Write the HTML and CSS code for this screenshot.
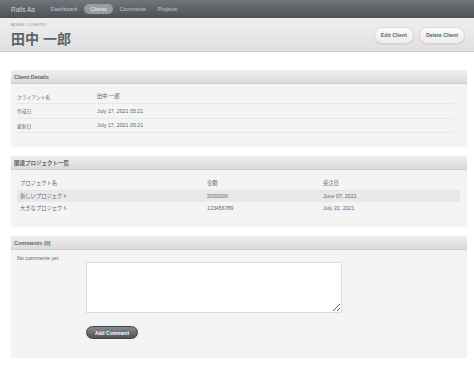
FILE: index.html
```html
<!DOCTYPE html>
<html lang="ja">
<head>
    <meta charset="UTF-8">
    <meta name="viewport" content="width=device-width, initial-scale=1.0">
    <title>田中 一郎 | Rails Aa</title>
    <link rel="stylesheet" href="styles.css">
</head>
<body>
    <div class="header">
        <span class="site-title">Rails Aa</span>
        <ul class="tabs">
            <li><a href="#">Dashboard</a></li>
            <li class="current"><a href="#">Clients</a></li>
            <li><a href="#">Comments</a></li>
            <li><a href="#">Projects</a></li>
        </ul>
    </div>

    <div class="title-bar">
        <div class="title-left">
            <div class="breadcrumb">ADMIN / CLIENTS /</div>
            <h2 class="page-title">田中 一郎</h2>
        </div>
        <div class="action-items">
            <a href="#" class="action-btn">Edit Client</a>
            <a href="#" class="action-btn">Delete Client</a>
        </div>
    </div>

    <div class="main">
        <div class="panel">
            <h3 class="panel-header">Client Details</h3>
            <div class="panel-body details">
                <table class="attr-table">
                    <tr><th>クライアント名</th><td>田中 一郎</td></tr>
                    <tr><th>作成日</th><td>July 17, 2021 05:21</td></tr>
                    <tr><th>更新日</th><td>July 17, 2021 05:21</td></tr>
                </table>
            </div>
        </div>

        <div class="panel">
            <h3 class="panel-header">関連プロジェクト一覧</h3>
            <div class="panel-body projects">
                <table class="index-table">
                    <thead>
                        <tr><th class="col-name">プロジェクト名</th><th class="col-amount">金額</th><th>受注日</th></tr>
                    </thead>
                    <tbody>
                        <tr class="odd"><td>新しいプロジェクト</td><td>2000000</td><td>June 07, 2021</td></tr>
                        <tr><td>大きなプロジェクト</td><td>123456789</td><td>July 22, 2021</td></tr>
                    </tbody>
                </table>
            </div>
        </div>

        <div class="panel">
            <h3 class="panel-header">Comments (0)</h3>
            <div class="panel-body comments">
                <p class="empty">No comments yet.</p>
                <form class="comment-form">
                    <textarea></textarea>
                    <button type="button" class="submit-btn">Add Comment</button>
                </form>
            </div>
        </div>
    </div>
</body>
</html>
```

FILE: styles.css
```css
* {
    margin: 0;
    padding: 0;
    box-sizing: border-box;
}

body {
    font-family: "Liberation Sans", "Noto Sans CJK JP", sans-serif;
    background: #fff;
    color: #323537;
    font-size: 5.3px;
}

a {
    text-decoration: none;
}

/* Header */
.header {
    height: 18px;
    background: linear-gradient(#70767b, #4b5155);
    display: flex;
    align-items: center;
    padding-left: 11px;
}

.site-title {
    color: #cfd1d3;
    font-size: 6.5px;
    margin-right: 11px;
}

.tabs {
    list-style: none;
    display: flex;
    align-items: center;
}

.tabs li a {
    display: block;
    color: #c4c7ca;
    font-size: 5.4px;
    padding: 2px 5px;
    border-radius: 8px;
    margin-right: 2px;
}

.tabs li.current a {
    background: #979ca1;
    color: #f4f4f4;
    padding: 2px 6px;
}

/* Title bar */
.title-bar {
    height: 34px;
    background: linear-gradient(#efefef, #e0e0e0);
    border-bottom: 1px solid #cdcdcd;
    display: flex;
    justify-content: space-between;
    align-items: center;
    padding: 0 9px 0 11px;
}

.breadcrumb {
    color: #8d9296;
    font-size: 4px;
    margin-bottom: 4px;
}

.page-title {
    color: #5e6469;
    font-size: 14px;
    font-weight: bold;
    line-height: 16px;
}

.action-items {
    display: flex;
    gap: 5px;
    margin-top: 2px;
}

.action-btn {
    display: block;
    background: linear-gradient(#fcfcfc, #ececec);
    border: 1px solid #d7d7d7;
    border-radius: 9px;
    color: #5e6469;
    font-size: 5.3px;
    font-weight: bold;
    height: 17px;
    line-height: 15px;
    padding: 0 6px;
    box-shadow: 0 1px 1px rgba(0, 0, 0, 0.08);
}

/* Panels */
.main {
    padding: 18px 7px 0 11px;
}

.panel {
    background: #f4f4f4;
    border-radius: 3px;
    margin-bottom: 9px;
    box-shadow: 0 0 1px rgba(0, 0, 0, 0.15);
}

.panel-header {
    height: 14px;
    line-height: 14px;
    background: linear-gradient(#efefef, #dbdbdb);
    border-bottom: 1px solid #cdcdcd;
    border-radius: 3px 3px 0 0;
    color: #5e6469;
    font-size: 5.5px;
    font-weight: bold;
    padding-left: 3px;
}

.panel-body.details {
    padding: 5px 12px 14px 6px;
    height: 63px;
}

.attr-table {
    width: 100%;
    border-collapse: collapse;
}

.attr-table th,
.attr-table td {
    text-align: left;
    font-weight: normal;
    color: #5e6469;
    height: 14.5px;
    border-bottom: 1px solid #e8e8e8;
    vertical-align: middle;
}

.attr-table th {
    width: 80px;
    font-size: 4.8px;
}

.panel-body.projects {
    padding: 7px 7px 0 6px;
    height: 57px;
}

.index-table {
    width: 100%;
    border-collapse: collapse;
}

.index-table th,
.index-table td {
    text-align: left;
    font-weight: normal;
    color: #5e6469;
    padding: 0 3px;
    height: 12px;
}

.index-table th {
    height: 13px;
    border-bottom: 1px solid #e4e4e4;
}

.index-table tr.odd td {
    background: #e9e9e9;
}

.col-name {
    width: 187px;
}

.col-amount {
    width: 116px;
}

.panel-body.comments {
    display: flex;
    height: 108px;
    padding: 5px 6px;
}

.empty {
    width: 69px;
    color: #5e6469;
}

.comment-form {
    display: flex;
    flex-direction: column;
    align-items: flex-start;
    padding-top: 7px;
}

.comment-form textarea {
    width: 256px;
    height: 51px;
    border: 1px solid #dcdcdc;
    background: #fff;
    resize: vertical;
    font-size: 5px;
}

.submit-btn {
    margin-top: 13px;
    width: 52px;
    height: 13px;
    border: 1px solid #3f4448;
    border-radius: 8px;
    background: linear-gradient(#868c91, #4c5155);
    color: #fff;
    font-family: "Liberation Sans", sans-serif;
    font-size: 5px;
    font-weight: bold;
}
```
